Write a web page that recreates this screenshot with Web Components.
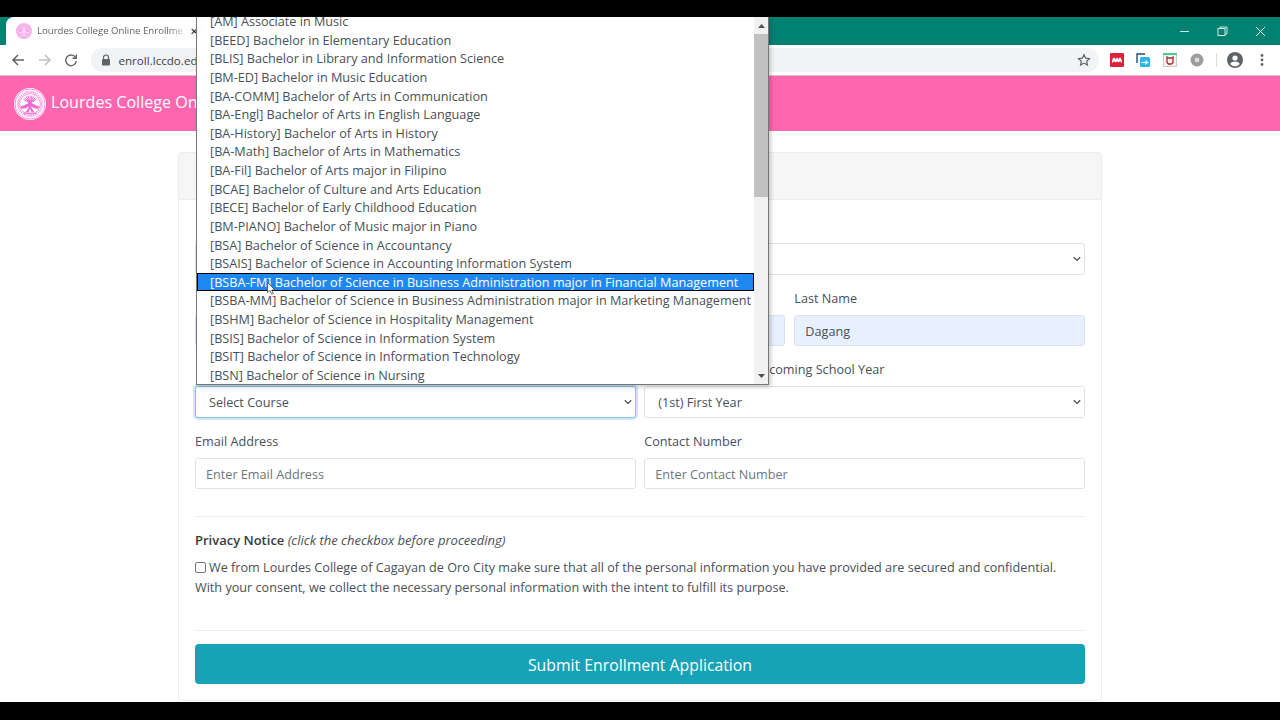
<!DOCTYPE html>
<html lang="en"><head><meta charset="utf-8"><title>Lourdes College Online Enrollment</title>
<style>
html,body{margin:0;padding:0;height:720px;overflow:hidden;background:#000}
body{font-family:"Open Sans","Noto Sans",sans-serif;font-size:12.65px;color:#495057}
</style></head><body>
<app-shell>
  <browser-chrome></browser-chrome>
  <enroll-nav>Lourdes College On</enroll-nav>
  <enroll-card>
    <form-row cols="1"><form-field kind="select"></form-field></form-row>
    <form-row cols="3">
      <form-field kind="filled"></form-field>
      <form-field kind="filled"></form-field>
      <form-field kind="filled" label="Last Name" value="Dagang"></form-field>
    </form-row>
    <form-row cols="2">
      <form-field kind="select" focus value="Select Course"></form-field>
      <form-field kind="select" label="Year Level for your Incoming School Year" value="(1st) First Year"></form-field>
    </form-row>
    <form-row cols="2">
      <form-field kind="input" label="Email Address" placeholder="Enter Email Address"></form-field>
      <form-field kind="input" label="Contact Number" placeholder="Enter Contact Number"></form-field>
    </form-row>
    <privacy-notice></privacy-notice>
    <submit-button>Submit Enrollment Application</submit-button>
  </enroll-card>
  <course-list></course-list>
</app-shell>
<script>
const def=(n,html)=>{customElements.define(n,class extends HTMLElement{
  connectedCallback(){ if(this.shadowRoot)return; const r=this.attachShadow({mode:'open'}); r.innerHTML=html; }
});};
const seal=(bg,fg,s)=>{
 let ticks='';
 for(let a=0;a<360;a+=9){ticks+=`<path d="M16 2.900V5" transform="rotate(${a} 16 16)"/>`;}
 let fan='';
 for(let a=-60;a<=60;a+=15){fan+=`<path d="M16 15V7.500" transform="rotate(${a} 16 15)"/>`;}
 return `<svg width="${s}" height="${s}" viewBox="0 0 32 32" aria-hidden="true"><circle cx="16" cy="16" r="16" fill="${bg}"/><circle cx="16" cy="16" r="15" fill="none" stroke="${fg}" stroke-width=".7"/><g stroke="${fg}" stroke-width=".8" fill="none">${ticks}</g><circle cx="16" cy="16" r="10.400" fill="none" stroke="${fg}" stroke-width=".7"/><g stroke="${fg}" stroke-width=".9" fill="none">${fan}</g><path d="M6.500 18.500c3.500-.5 6-2.500 9.500-4.500 3.500 2 6 4 9.500 4.500l-1.200 2.200c-3 .2-5.300-.8-6.300-2h-4c-1 1.200-3.300 2.200-6.300 2z" fill="${fg}"/><path d="M11.500 24.500l4.500-7.500 4.500 7.500z" fill="${fg}"/><path d="M14.500 24.500l1.500-4 1.500 4z" fill="${bg}"/><path d="M9.500 25.300h13" stroke="${fg}" stroke-width="1"/></svg>`;
};

def('app-shell',`<style>
:host{display:flex;flex-direction:column;position:relative;width:1280px;height:720px;overflow:hidden;background:#000;padding:17px 0 18px;box-sizing:border-box}
.page{flex:1;min-height:0;display:flex;flex-direction:column;background:#fff;overflow:hidden}
</style><div class="page"><slot></slot></div>`);

def('browser-chrome',`<style>
:host{display:block;flex:none;font-family:"Open Sans",sans-serif}
.strip{height:28px;background:#008272;display:flex;align-items:flex-end;padding-left:6px}
.tab{width:200px;height:28px;background:#fff;border-radius:8px 8px 0 0;display:flex;align-items:center;box-sizing:border-box;padding:0 0 1px 10px;gap:5px;font-size:9.600px;color:#5f6368;white-space:nowrap}
.tab span{width:146px;-webkit-mask-image:linear-gradient(90deg,#000 90%,rgba(0,0,0,.3))}
.x{font-size:10px;color:#222;line-height:1;font-weight:400;margin-left:2px}
.spacer{flex:1}
.win{display:flex;align-items:center;height:28px}
.win i{display:flex;width:38px;height:28px;justify-content:center;align-items:center}
.tool{height:30px;background:#fff;display:flex;align-items:center;padding-left:5px;border-bottom:1px solid #e3b9cc}
.nav{width:26.500px;height:30px;display:flex;align-items:center;justify-content:center}
.url{margin-left:6px;width:1008px;height:24px;border-radius:12px;background:#f1f3f4;display:flex;align-items:center;padding:0 8px 0 10px;box-sizing:border-box;font-size:11.600px;color:#3c4043}
.url .t{margin-left:8px;flex:1}
.ext{display:flex;align-items:center;justify-content:center;width:26.500px;height:30px}
.sep{width:1px;height:14px;background:#dadce0;margin:0 5px 0 6px}
</style>
<div class="strip">
 <div class="tab">${seal('#f3a6e6','#fbdcf5',16)}<span>Lourdes College Online Enrollme</span><b class="x">✕</b></div>
 <div class="spacer"></div>
 <div class="win">
  <i><svg width="11" height="11" viewBox="0 0 11 11"><path d="M1 5.500h9" stroke="#cfe9e4"/></svg></i>
  <i><svg width="11" height="11" viewBox="0 0 11 11" fill="none" stroke="#cfe9e4"><rect x="1" y="2.500" width="7" height="7"/><path d="M3 2.500V1h7v7H8"/></svg></i>
  <i><svg width="11" height="11" viewBox="0 0 11 11"><path d="M1 1l9 9M10 1l-9 9" stroke="#e6f3f0"/></svg></i>
 </div>
 <div style="width:1px"></div>
</div>
<div class="tool">
 <div class="nav"><svg width="14" height="14" viewBox="0 0 14 14" fill="none" stroke="#5f6368" stroke-width="1.500"><path d="M13 7H2M7 2L2 7l5 5"/></svg></div>
 <div class="nav"><svg width="14" height="14" viewBox="0 0 14 14" fill="none" stroke="#bdc1c6" stroke-width="1.500"><path d="M1 7h11M7 2l5 5-5 5"/></svg></div>
 <div class="nav"><svg width="14" height="14" viewBox="0 0 14 14" fill="none" stroke="#5f6368" stroke-width="1.400"><path d="M11.800 5A5.300 5.300 0 1 0 12.300 8"/><path d="M12.300 1.500V5.300H8.500" /></svg></div>
 <div class="url"><svg width="10" height="12" viewBox="0 0 10 12"><path d="M2.500 5V3.500a2.500 2.500 0 0 1 5 0V5" fill="none" stroke="#5f6368" stroke-width="1.200"/><rect x="1" y="5" width="8" height="6.500" rx="1" fill="#5f6368"/></svg><span class="t">enroll.lccdo.edu</span>
  <svg width="14" height="14" viewBox="0 0 24 24" fill="none" stroke="#5f6368" stroke-width="2"><path d="M12 2.800l2.800 6.100 6.700.7-5 4.500 1.400 6.600-5.900-3.400-5.900 3.400 1.400-6.600-5-4.500 6.700-.7z"/></svg></div>
 <div style="width:5.250px"></div>
 <div class="ext"><svg width="14" height="14" viewBox="0 0 14 14"><rect width="14" height="14" rx="1" fill="#dc2139"/><path d="M2 10c0-2.500.8-5.500 2-5.500 .8 0 1.500 1.200 1.800 2.400C6.200 5.600 6.500 4.500 7 4.500s.8 1.100 1.200 2.400C8.500 5.700 9.200 4.500 10 4.500c1.200 0 2 3 2 5.500-1-.8-1.500-1.500-2-1.500s-1 .8-1.500.8S7.500 8.500 7 8.500s-1 .8-1.500.8S4.500 8.500 4 8.500s-1 .7-2 1.500z" fill="#fff"/></svg></div>
 <div class="ext"><svg width="15" height="15" viewBox="0 0 15 15"><path d="M1 10V1h8" fill="none" stroke="#1f4e79" stroke-width="1.400"/><rect x="4" y="4" width="10" height="10" rx="1.500" fill="#2bb6e6"/><path d="M5.500 9h4V7l3 2.500-3 2.500v-2h-4z" fill="#fff"/></svg></div>
 <div class="ext"><svg width="14" height="14" viewBox="0 0 14 14"><rect x=".5" y=".5" width="13" height="13" fill="#f4f4f4" stroke="#c9c9c9"/><rect width="14" height="2" fill="#3ecf8e"/><path d="M4 4l1 1h4l1-1v5.500L8.500 11h-3L4 9.500z" fill="none" stroke="#b3262e" stroke-width="1.300"/></svg></div>
 <div class="ext"><svg width="14" height="14" viewBox="0 0 14 14"><circle cx="7" cy="7" r="6.500" fill="#9c9c9c"/><circle cx="7" cy="7" r="2.400" fill="#dcdcdc"/></svg></div>
 <div class="sep"></div>
 <div class="ext"><svg width="16" height="16" viewBox="0 0 16 16"><circle cx="8" cy="8" r="8" fill="#5f6368"/><circle cx="8" cy="6" r="2.600" fill="#fff"/><path d="M3.200 12c1-1.800 3-2.500 4.800-2.500s3.800.7 4.800 2.500a6 6 0 0 1-9.600 0z" fill="#fff"/></svg></div>
 <div class="ext"><svg width="4" height="14" viewBox="0 0 4 14" fill="#5f6368"><circle cx="2" cy="2.500" r="1.400"/><circle cx="2" cy="7" r="1.400"/><circle cx="2" cy="11.500" r="1.400"/></svg></div>
</div>`);

def('enroll-nav',`<style>
:host{display:flex;flex:none;align-items:center;height:55px;background:#ff66b0;padding-left:14px;gap:5px;color:#fff;font-size:16.100px;box-sizing:border-box;white-space:nowrap}
span{margin-top:-3px}
</style>${seal('#fff','#f06ad2',32)}<span><slot></slot></span>`);

def('enroll-card',`<style>
:host{display:block;flex:none;box-sizing:border-box;width:924px;margin:21px auto 0;border:1px solid #ececec;border-radius:4px;background:#fff}
.head{height:46px;background:#f6f6f6;border-bottom:1px solid #ececec;border-radius:4px 4px 0 0}
.body{padding:16px 16px 16px;display:flex;flex-direction:column;gap:13px}
</style><div class="head"></div><div class="body"><slot></slot></div>`);

customElements.define('form-row',class extends HTMLElement{connectedCallback(){if(this.shadowRoot)return;const n=+this.getAttribute('cols')||1;const g=n===3?9:8.5;
 this.attachShadow({mode:'open'}).innerHTML=`<style>:host{display:grid;grid-template-columns:repeat(${n},1fr);gap:${g}px}</style><slot></slot>`;}});

customElements.define('form-field',class extends HTMLElement{connectedCallback(){if(this.shadowRoot)return;
 const k=this.getAttribute('kind'),l=this.getAttribute('label')||'',v=this.getAttribute('value')||'',p=this.getAttribute('placeholder')||'',f=this.hasAttribute('focus');
 const cls=['ctl',k,f?'focus':''].join(' ');
 const txt=v?`<span>${v}</span>`:(p?`<span class="ph">${p}</span>`:'<span></span>');
 const chev=k==='select'?`<svg class="chev" width="8" height="6" viewBox="0 0 8 6" fill="none" stroke="#4a4f55" stroke-width="1.300"><path d="M.8 1.200L4 4.400l3.200-3.200"/></svg>`:'';
 this.attachShadow({mode:'open'}).innerHTML=`<style>
 :host{display:block;min-width:0}
 .lab{height:20px;line-height:20px;margin-bottom:7px;white-space:nowrap;color:#495057}
 .ctl{height:31.500px;box-sizing:border-box;border:1px solid #dfe2e5;border-radius:3px;display:flex;align-items:center;justify-content:space-between;padding:0 4px 0 10px;color:#495057;background:#fff}
 .ctl span{padding-top:1px}
 .filled{background:#e8f0fe;border-color:#d8e2ef;}
 .focus{border-color:#86c3e8;box-shadow:0 0 0 2px #cfe6f7;}
 .ph{color:#6c757d}
 .select{padding:0 3px 0 13px}
 </style><div class="lab">${l}</div><div class="${cls}">${txt}${chev}</div>`;}});

def('privacy-notice',`<style>
:host{display:block;color:#495057;margin-top:14px;border-top:1px solid #ececec;padding-top:13px}
.t{line-height:20px;height:20px}
b{color:#343a40;font-weight:600;font-size:13px}
i{font-size:13px}
.p{margin-top:7px;line-height:20px;white-space:nowrap}
.box{display:inline-block;width:9px;height:9px;border:1px solid #767676;border-radius:2px;vertical-align:-.5px;margin-right:3px}
.rule{border-top:1px solid #ececec;margin-top:33px}
</style><div class="t"><b>Privacy Notice</b> <i>(click the checkbox before proceeding)</i></div>
<div class="p"><span class="box"></span>We from Lourdes College of Cagayan de Oro City make sure that all of the personal information you have provided are secured and confidential.<br>With your consent, we collect the necessary personal information with the intent to fulfill its purpose.</div>
<div class="rule"></div>`);

def('submit-button',`<style>
:host{display:flex;align-items:center;justify-content:center;height:40px;box-sizing:border-box;padding-top:1px;background:#17a2b8;border-radius:4px;color:#fff;font-size:15.800px;font-weight:500}
</style><slot></slot>`);

const courses=["[AM] Associate in Music","[BEED] Bachelor in Elementary Education","[BLIS] Bachelor in Library and Information Science","[BM-ED] Bachelor in Music Education","[BA-COMM] Bachelor of Arts in Communication","[BA-Engl] Bachelor of Arts in English Language","[BA-History] Bachelor of Arts in History","[BA-Math] Bachelor of Arts in Mathematics","[BA-Fil] Bachelor of Arts major in Filipino","[BCAE] Bachelor of Culture and Arts Education","[BECE] Bachelor of Early Childhood Education","[BM-PIANO] Bachelor of Music major in Piano","[BSA] Bachelor of Science in Accountancy","[BSAIS] Bachelor of Science in Accounting Information System","[BSBA-FM] Bachelor of Science in Business Administration major in Financial Management","[BSBA-MM] Bachelor of Science in Business Administration major in Marketing Management","[BSHM] Bachelor of Science in Hospitality Management","[BSIS] Bachelor of Science in Information System","[BSIT] Bachelor of Science in Information Technology","[BSN] Bachelor of Science in Nursing"];
def('course-list',`<style>
:host{position:absolute;left:196px;top:17px;width:573px;height:368px;box-sizing:border-box;border:1px solid #767676;border-top:0;background:#fff;box-shadow:2px 2px 4px rgba(0,0,0,.2);display:flex;overflow:hidden;z-index:5}
.items{flex:1;min-width:0;margin-top:-5px;font-size:12.650px;color:#495057}
.o{height:18.640px;line-height:18.640px;padding-left:13px;white-space:nowrap;box-sizing:border-box}
.o.sel{background:#1e88f0;color:#fff;outline:1px solid #000;outline-offset:-1px}
.bar{width:14px;flex:none;background:#f1f1f1;display:flex;flex-direction:column;position:relative}
.a{height:17px;display:flex;align-items:center;justify-content:center}
.th{height:163px;background:#c1c1c1}
.f{flex:1}
.cur{position:absolute;left:70px;top:265px}
</style><div class="items">${courses.map((c,i)=>`<div class="o${i===14?' sel':''}">${c}</div>`).join('')}</div>
<div class="bar"><div class="a"><svg width="7" height="4" viewBox="0 0 7 4"><path d="M3.500 0L7 4H0z" fill="#505050"/></svg></div><div class="th"></div><div class="f"></div><div class="a"><svg width="7" height="4" viewBox="0 0 7 4"><path d="M0 0h7L3.500 4z" fill="#505050"/></svg></div></div>
<svg class="cur" width="9" height="14" viewBox="0 0 9 14"><path d="M.5.500v10l2.500-2 1.700 3.800 1.700-.8L4.700 8H8z" fill="#fff" stroke="#333" stroke-width=".7"/></svg>`);
</script>
</body></html>
